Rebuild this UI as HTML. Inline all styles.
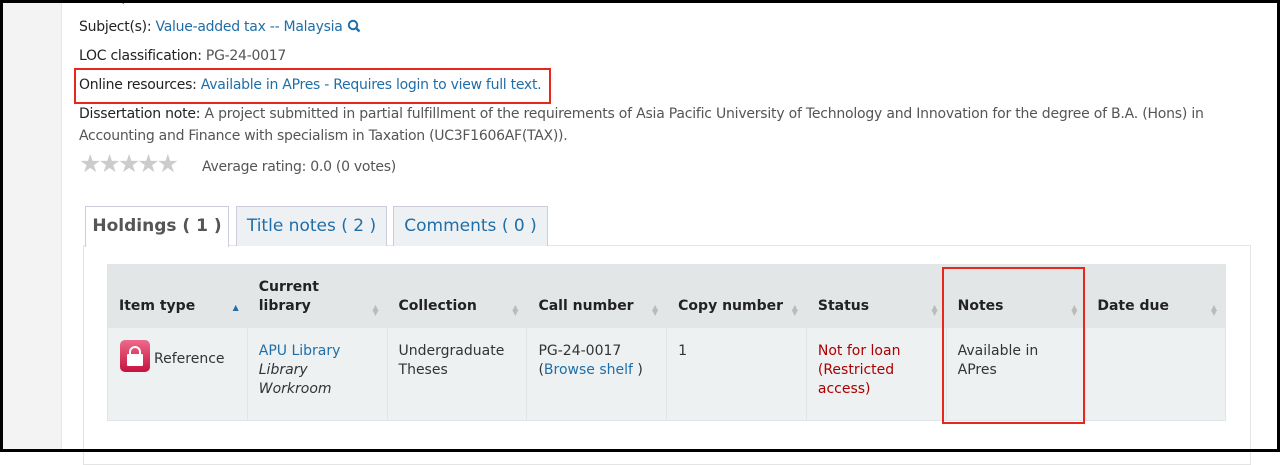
<!DOCTYPE html>
<html><head><style>
*{box-sizing:border-box;margin:0;padding:0}
body{width:1280px;height:452px;overflow:hidden;background:#fff;font-family:"DejaVu Sans","Liberation Sans",sans-serif;font-size:14px;color:#333;position:relative}
.frame{position:absolute;left:0;top:0;width:1280px;height:452px;border:3px solid #000;z-index:10;pointer-events:none}
.side{position:absolute;left:0;top:0;width:62px;height:452px;background:#f3f3f3;border-right:1px solid #e6e6e6}
a{color:#1f6ea8;text-decoration:none}
.ln{position:absolute;left:79px;white-space:nowrap;letter-spacing:-0.27px}
.lbl{color:#222}
.val{color:#555}
.red{position:absolute;border:2px solid #e8261b}
.tab{position:absolute;top:206px;height:40px;border:1px solid #ccd;border-bottom:none;background:#eef1f3;font-size:17px;text-align:center;line-height:38px;color:#1f6ea8}
.panel{position:absolute;left:83px;top:245px;width:1168px;height:220px;border:1px solid #e4e4e4}
table{position:absolute;left:107px;top:264px;border-collapse:collapse;width:1119px}
th,td{width:140px;border:1px solid #e2e5e7;vertical-align:top;text-align:left;padding:0 11px}
th{background:#e2e6e7;height:63px;vertical-align:top;font-weight:bold;color:#222;position:relative;line-height:19px;padding-top:32px}
th.two{padding-top:13px}
td{background:#edf1f2;height:93px;padding-top:14px;line-height:19px;color:#333}
th .s{position:absolute;right:8px;top:40px;color:#bbb;font-size:8px;line-height:5px}
</style></head><body>
<div class="side"></div>
<div class="ln val" style="top:-11px;color:#777">Description: 1 online resource</div>
<div class="ln" style="top:19px"><span class="lbl">Subject(s):</span> <a>Value-added tax -- Malaysia</a> <svg width="14" height="14" viewBox="0 0 14 14" style="vertical-align:-2px"><circle cx="6" cy="6" r="4.2" fill="none" stroke="#1f6ea8" stroke-width="2"/><line x1="9" y1="9" x2="12.5" y2="12.5" stroke="#1f6ea8" stroke-width="2.4"/></svg></div>
<div class="ln" style="top:48px"><span class="lbl">LOC classification:</span> <span class="val">PG-24-0017</span></div>
<div class="ln" style="top:77px"><span class="lbl">Online resources:</span> <a>Available in APres - Requires login to view full text.</a></div>
<div class="red" style="left:74px;top:68px;width:477px;height:36px"></div>
<div class="ln" style="top:106px;letter-spacing:-0.22px"><span class="lbl">Dissertation note:</span> <span class="val">A project submitted in partial fulfillment of the requirements of Asia Pacific University of Technology and Innovation for the degree of B.A. (Hons) in</span></div>
<div class="ln val" style="top:128px">Accounting and Finance with specialism in Taxation (UC3F1606AF(TAX)).</div>
<div class="ln" style="top:149px;color:#ccc;font-size:25px;letter-spacing:-3px">★★★★★</div>
<div class="ln val" style="top:159px;left:202px">Average rating: 0.0 (0 votes)</div>
<div class="panel"></div>
<div class="tab" style="left:85px;width:144px;background:#fff;color:#555;font-weight:bold;height:41px">Holdings ( 1 )</div>
<div class="tab" style="left:236px;width:151px">Title notes ( 2 )</div>
<div class="tab" style="left:393px;width:155px">Comments ( 0 )</div>
<table>
<tr><th>Item type<span class="s" style="color:#1f6ea8">▲</span></th><th class="two">Current<br>library<span class="s">▲<br>▼</span></th><th>Collection<span class="s">▲<br>▼</span></th><th>Call number<span class="s">▲<br>▼</span></th><th>Copy number<span class="s">▲<br>▼</span></th><th>Status<span class="s">▲<br>▼</span></th><th>Notes<span class="s">▲<br>▼</span></th><th>Date due<span class="s">▲<br>▼</span></th></tr>
<tr><td style="padding-left:12px;padding-top:18px"><span style="display:inline-block;width:30px;height:32px;border-radius:5px;background:linear-gradient(#ee6a8a,#c5123f);vertical-align:middle;position:relative;margin-right:4px;margin-top:-6px"><span style="position:absolute;left:9px;top:6px;width:12px;height:10px;border:2px solid #fff;border-bottom:none;border-radius:6px 6px 0 0"></span><span style="position:absolute;left:7px;top:14px;width:16px;height:12px;background:#fff;border-radius:1px"></span></span>Reference</td>
<td><a>APU Library</a><br><i>Library<br>Workroom</i></td><td>Undergraduate<br>Theses</td><td>PG-24-0017<br>(<a>Browse shelf</a> )</td><td>1</td><td style="color:#a00">Not for loan<br>(Restricted<br>access)</td><td>Available in<br>APres</td><td></td></tr>
</table>
<div class="red" style="left:942px;top:267px;width:143px;height:157px"></div>
<div class="frame"></div>
</body></html>
